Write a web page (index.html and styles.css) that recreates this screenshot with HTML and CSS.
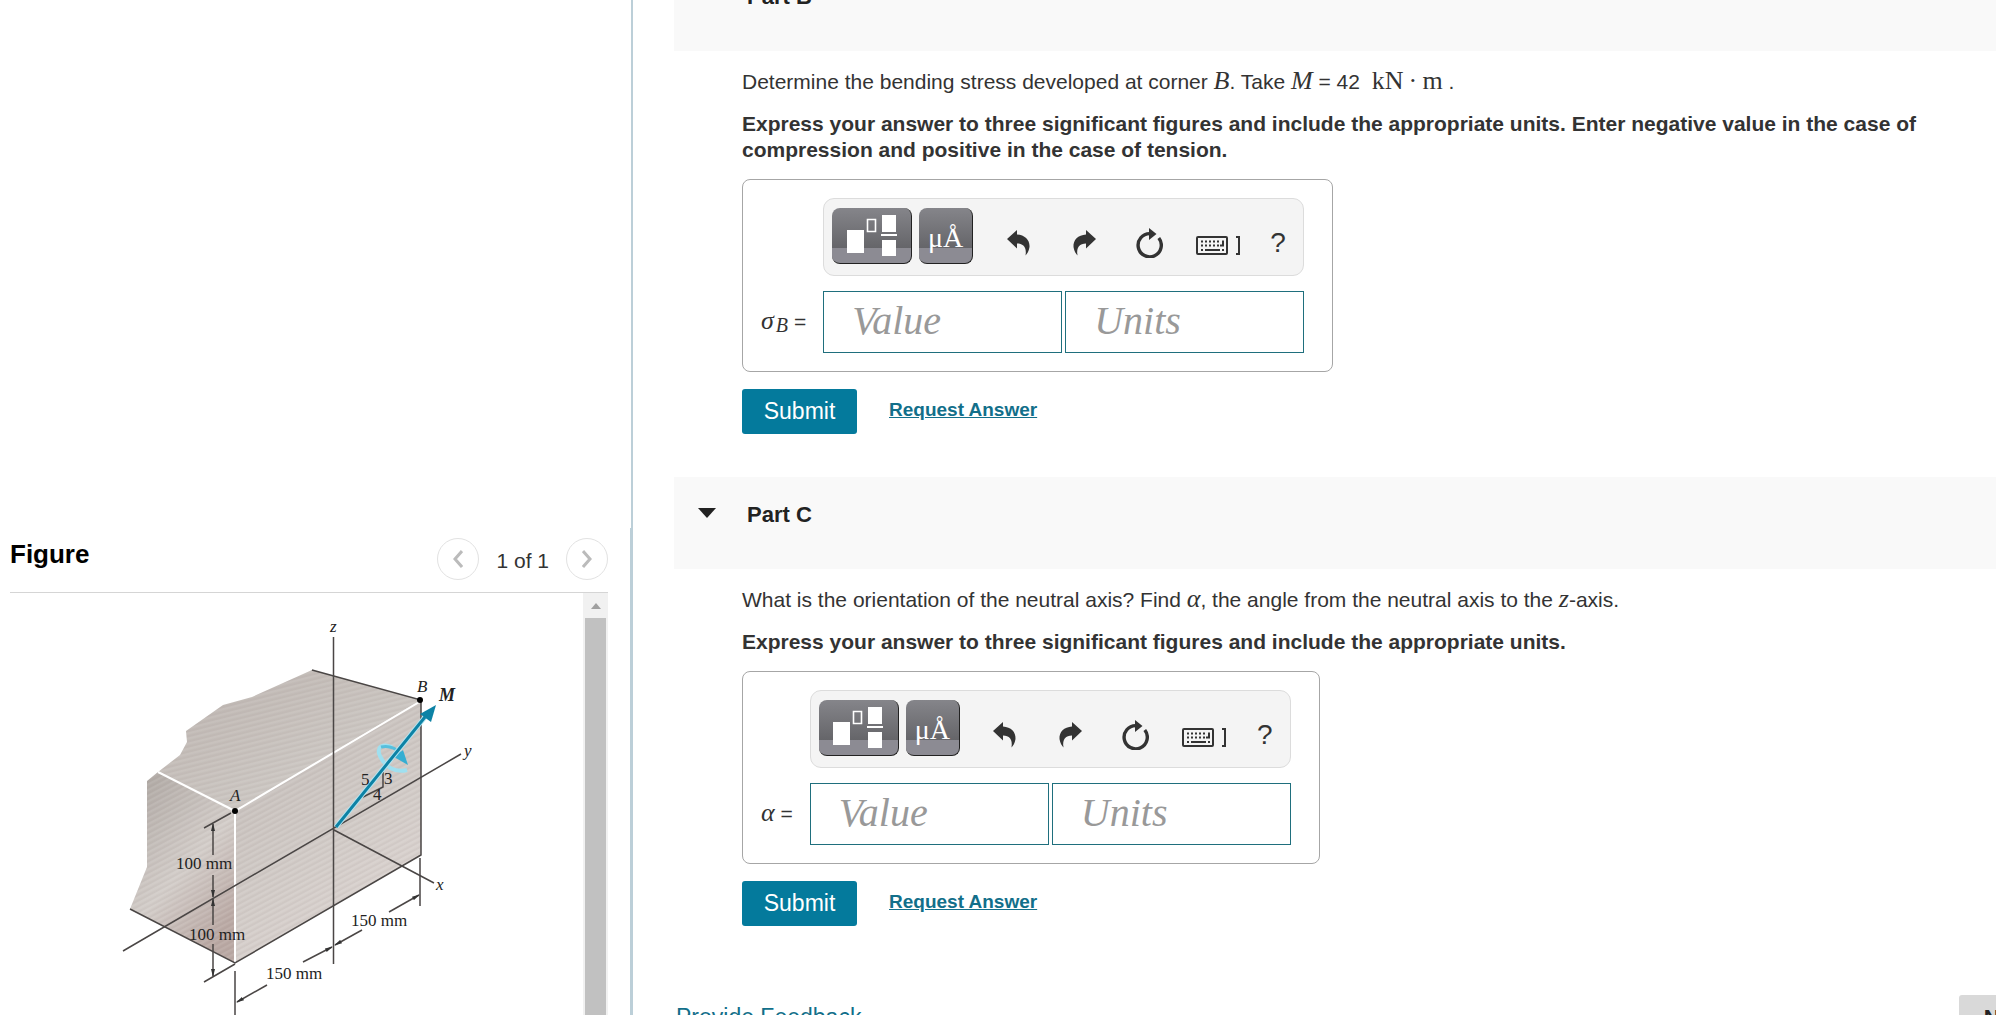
FILE: index.html
```
<!DOCTYPE html>
<html lang="en">
<head>
  <meta charset="UTF-8" />
  <meta name="viewport" content="width=device-width, initial-scale=1.0" />
  <title>Bending Stress</title>
  <link rel="stylesheet" href="styles.css">
</head>
<body>

  <!-- shared toolbar icons -->
  <svg class="defs" width="0" height="0" aria-hidden="true">
    <symbol id="i-template" viewBox="0 0 50 42">
      <path fill="#fff" d="M0 15h17v23H0zM35 0h14v17H35zM35 25h14v16H35zM34 19h16v2H34z" />
      <path fill="none" stroke="#fff" stroke-width="1.6" d="M20.5 4.5h8v12h-8z" />
    </symbol>
    <symbol id="i-undo" viewBox="0 0 24 26">
      <path d="M0 9 10 0v4.5C18 5 23 10 22.500 17 22 21 20 24 18.500 25.500 20 17 16 13.500 10 13.500v5z" />
    </symbol>
    <symbol id="i-redo" viewBox="0 0 24 26">
      <path d="M24 9 14 0v4.500C6 5 1 10 1.500 17 2 21 4 24 5.500 25.500 4 17 8 13.500 14 13.500v5z" />
    </symbol>
    <symbol id="i-reset" viewBox="0 0 28 30">
      <path fill="none" stroke="currentColor" stroke-width="3.400" d="M15 5.600A11.600 11.600 0 1 0 23.800 10" />
      <path d="M14 0 21.500 6 14 12z" />
    </symbol>
    <symbol id="i-keyboard" viewBox="0 0 46 20">
      <rect x="1" y="1" width="30" height="17" rx="1" fill="none" stroke="currentColor" stroke-width="2" />
      <path fill="none" stroke="currentColor" stroke-width="2" stroke-dasharray="2 2" d="M5 5.500h20M5 9.500h20" />
      <path fill="none" stroke="currentColor" stroke-width="2" d="M27 4.500v5h-3M5 14h2M9 14h15M26 14h2M40 1h3v17h-3" />
    </symbol>
  </svg>

  <aside class="side">
    <section class="figure">
      <header class="figure-head">
        <h2>Figure</h2>
        <nav class="pager">
          <button type="button" aria-label="Previous figure">
            <svg width="10" height="18" viewBox="0 0 10 18"><path d="M9 1 2 9l7 8" /></svg>
          </button>
          <span>1 of 1</span>
          <button type="button" aria-label="Next figure">
            <svg width="10" height="18" viewBox="0 0 10 18"><path d="M1 1l7 8-7 8" /></svg>
          </button>
        </nav>
      </header>
      <div class="figure-view">
        <svg class="beam" width="573" height="440" viewBox="10 594 573 440" role="img" aria-label="Beam cross section with moment M">
          <defs>
            <linearGradient id="top" x1="0" y1="0" x2="1" y2="1">
              <stop offset="0" stop-color="#bab2ad" />
              <stop offset="1" stop-color="#d6d2ce" />
            </linearGradient>
            <linearGradient id="left" x1="0" y1="0" x2="0.6" y2="1">
              <stop offset="0" stop-color="#aaa39e" />
              <stop offset="0.6" stop-color="#d3cdc9" />
              <stop offset="1" stop-color="#b9a8a3" />
            </linearGradient>
            <linearGradient id="front" x1="0" y1="0" x2="0.5" y2="1">
              <stop offset="0" stop-color="#bfb9b5" />
              <stop offset="1" stop-color="#dcd5d1" />
            </linearGradient>
            <pattern id="grain" width="40" height="5" patternUnits="userSpaceOnUse" patternTransform="rotate(-28)">
              <path d="M0 1h40" stroke="#8d817b" stroke-opacity=".14" />
              <path d="M0 3h40" stroke="#fff" stroke-opacity=".14" />
            </pattern>
            <pattern id="grain-top" width="40" height="5" patternUnits="userSpaceOnUse" patternTransform="rotate(-14)">
              <path d="M0 1h40" stroke="#8d817b" stroke-opacity=".12" />
              <path d="M0 3h40" stroke="#fff" stroke-opacity=".12" />
            </pattern>
            <marker id="tip" markerWidth="8" markerHeight="4" refX="7" refY="2" orient="auto-start-reverse" markerUnits="userSpaceOnUse">
              <path d="M0 0 8 2 0 4z" fill="#333" />
            </marker>
          </defs>

          <!-- faces -->
          <path id="face-top" fill="url(#top)" d="M312 671 421 701 235 812 158 773 180 756 187 743 186 732 223 706 252 698z" />
          <path fill="url(#grain-top)" d="M312 671 421 701 235 812 158 773 180 756 187 743 186 732 223 706 252 698z" />
          <path fill="url(#left)" d="M158 773 235 812V964L130 910 147 868V782z" />
          <path fill="url(#grain)" d="M158 773 235 812V964L130 910 147 868V782z" />
          <path fill="url(#front)" d="M235 812 421 701V856L235 964z" />
          <path fill="url(#grain)" d="M235 812 421 701V856L235 964z" />
          <path class="edge-light" d="M158 773 235 812 421 702M235 812V964" />
          <path class="edge" d="M312 671 421 701V856L235 964 130 910" />

          <!-- axes -->
          <path class="axis" d="M333.500 638V965M123 952 461 755M334 831 434 884" />

          <!-- dimensions -->
          <g class="dim">
            <path d="M204 829 231 814M204 983 235 965M235 972V1034M420 859V907" />
            <path marker-start="url(#tip)" d="M213 825V856" />
            <path marker-end="url(#tip)" d="M213 876V898" />
            <path marker-start="url(#tip)" d="M213 900V926" />
            <path marker-end="url(#tip)" d="M213 945V977" />
            <path marker-start="url(#tip)" d="M237 1003 267 986" />
            <path marker-end="url(#tip)" d="M303 963 332 948" />
            <path marker-start="url(#tip)" d="M335 946 362 931" />
            <path marker-end="url(#tip)" d="M389 913 419 896" />
            <path d="M383 773V788L363 798" />
          </g>

          <!-- moment vector -->
          <path d="M392 748C382 744 376 748 380 757 385 768 395 774 407 771" fill="none" stroke="#9fe0f0" stroke-width="4" />
          <path d="M381 748C390 746 398 750 402 757" fill="none" stroke="#56bfdd" stroke-width="3" />
          <path d="M408 766 394 758 403 751z" fill="#35aed2" />
          <path d="M336 828 425 718" stroke="#b5e6f2" stroke-width="5" />
          <path d="M336 828 425 718" stroke="#0d82a5" stroke-width="3" />
          <path d="M436 706 431 723 420 715z" fill="#0d82a5" />

          <circle cx="235" cy="812" r="3" />
          <circle cx="420" cy="701" r="3" />

          <g class="fig-text">
            <text x="176" y="870">100 mm</text>
            <text x="189" y="941">100 mm</text>
            <text x="266" y="980">150 mm</text>
            <text x="351" y="927">150 mm</text>
            <text x="361" y="786">5</text>
            <text x="384" y="785">3</text>
            <text x="373" y="801">4</text>
            <g class="fig-var">
              <text x="330" y="633">z</text>
              <text x="230" y="802">A</text>
              <text x="417" y="693">B</text>
              <text x="439" y="702" class="fig-m">M</text>
              <text x="464" y="757">y</text>
              <text x="436" y="891">x</text>
            </g>
          </g>
        </svg>
        <div class="scrollbar">
          <i class="scroll-up"></i>
          <i class="scroll-thumb"></i>
        </div>
      </div>
    </section>
  </aside>

  <main class="content">
    <section class="part">
      <header class="part-head">
        <i class="caret"></i>
        <h2>Part B</h2>
      </header>
      <div class="part-body">
        <p>Determine the bending stress developed at corner <span class="math"><i>B</i></span>. Take <span class="math"><i>M</i></span> = 42 &nbsp;<span class="math">kN&#8201;·&#8201;m</span> .</p>
        <p class="hint">Express your answer to three significant figures and include the appropriate units. Enter negative value in the case of compression and positive in the case of tension.</p>
        <form class="answer">
          <div class="toolbar">
            <button type="button" class="key key-wide" aria-label="Templates"><svg width="50" height="42"><use href="#i-template" /></svg></button>
            <button type="button" class="key">μÅ</button>
            <button type="button" class="tool" aria-label="Undo"><svg width="24" height="26"><use href="#i-undo" /></svg></button>
            <button type="button" class="tool" aria-label="Redo"><svg width="24" height="26"><use href="#i-redo" /></svg></button>
            <button type="button" class="tool" aria-label="Reset"><svg width="28" height="30"><use href="#i-reset" /></svg></button>
            <button type="button" class="tool tool-keys" aria-label="Keyboard shortcuts"><svg width="46" height="20"><use href="#i-keyboard" /></svg></button>
            <button type="button" class="tool tool-help">?</button>
          </div>
          <label class="symbol" for="value-b"><i>σ</i><sub>B</sub> =</label>
          <div class="fields">
            <input id="value-b" type="text" placeholder="Value">
            <input type="text" placeholder="Units" aria-label="Units">
          </div>
        </form>
        <div class="actions">
          <button type="button" class="submit">Submit</button>
          <a href="#">Request Answer</a>
        </div>
      </div>
    </section>

    <section class="part">
      <header class="part-head">
        <i class="caret"></i>
        <h2>Part C</h2>
      </header>
      <div class="part-body">
        <p>What is the orientation of the neutral axis? Find <span class="math"><i>α</i></span>, the angle from the neutral axis to the <span class="math"><i>z</i></span>-axis.</p>
        <p class="hint">Express your answer to three significant figures and include the appropriate units.</p>
        <form class="answer">
          <div class="toolbar">
            <button type="button" class="key key-wide" aria-label="Templates"><svg width="50" height="42"><use href="#i-template" /></svg></button>
            <button type="button" class="key">μÅ</button>
            <button type="button" class="tool" aria-label="Undo"><svg width="24" height="26"><use href="#i-undo" /></svg></button>
            <button type="button" class="tool" aria-label="Redo"><svg width="24" height="26"><use href="#i-redo" /></svg></button>
            <button type="button" class="tool" aria-label="Reset"><svg width="28" height="30"><use href="#i-reset" /></svg></button>
            <button type="button" class="tool tool-keys" aria-label="Keyboard shortcuts"><svg width="46" height="20"><use href="#i-keyboard" /></svg></button>
            <button type="button" class="tool tool-help">?</button>
          </div>
          <label class="symbol" for="value-c"><i>α</i> =</label>
          <div class="fields">
            <input id="value-c" type="text" placeholder="Value">
            <input type="text" placeholder="Units" aria-label="Units">
          </div>
        </form>
        <div class="actions">
          <button type="button" class="submit">Submit</button>
          <a href="#">Request Answer</a>
        </div>
      </div>
    </section>

    <footer class="foot">
      <a href="#">Provide Feedback</a>
      <button type="button" class="next">Next</button>
    </footer>
  </main>

</body>
</html>
```
FILE: styles.css
```
* {
  box-sizing: border-box;
}

body {
  margin: 0;
  display: flex;
  height: 100vh;
  overflow: hidden;
  background: #fff;
  color: #333;
  font-family: "Liberation Sans", Arial, sans-serif;
  font-size: 21px;
  line-height: 26px;
}

h2, p {
  margin: 0;
}

button {
  font-family: inherit;
  padding: 0;
  border: none;
  cursor: pointer;
}

.defs {
  position: absolute;
}

/* left side */
.side {
  flex: 0 0 633px;
  display: grid;
  grid-template-rows: 52vh 1fr;
  border-right: 2px solid #bccfd8;
}

.figure {
  grid-row: 2;
  display: flex;
  flex-direction: column;
  min-height: 0;
  padding: 0 22px 0 10px;
  border-right: 1px solid #bccfd8;
}

.figure-head {
  display: flex;
  justify-content: space-between;
  padding: 10px 0 12px;
  border-bottom: 1px solid #d5d5d5;
}

.figure-head h2 {
  color: #000;
  font-size: 26px;
  line-height: 32px;
}

.pager {
  display: flex;
  align-items: center;
  gap: 17px;
}

.pager span {
  padding-top: 4px;
}

.pager button {
  width: 42px;
  height: 42px;
  display: grid;
  place-items: center;
  border: 1px solid #e2e2e2;
  border-radius: 50%;
  background: #fff;
}

.pager path {
  fill: none;
  stroke: #bbb;
  stroke-width: 3;
}

.figure-view {
  display: flex;
  justify-content: space-between;
  flex: 1;
  min-height: 0;
  overflow: hidden;
}

.beam {
  flex: 0 0 auto;
}

.edge, .edge-light, .axis, .dim {
  fill: none;
  stroke: #4a4645;
  stroke-width: 1.5;
}

.edge-light {
  stroke: #fff;
  stroke-width: 2;
}

.fig-text {
  font-family: "Liberation Serif", "Times New Roman", serif;
  font-size: 17px;
  fill: #222;
}

.fig-var {
  font-style: italic;
}

.fig-m {
  font-size: 18px;
  font-weight: bold;
}

.scrollbar {
  flex: 0 0 25px;
  display: flex;
  flex-direction: column;
  align-items: center;
  background: #f1f1f1;
}

.scroll-up {
  margin: 10px 0 9px;
  border: 5px solid transparent;
  border-top: none;
  border-bottom: 6px solid #a0a0a0;
}

.scroll-thumb {
  flex: 1;
  width: 21px;
  background: #c1c1c1;
}

/* right side */
.content {
  flex: 1;
  min-width: 0;
  margin-top: -41px; /* scrolled a little past Part B */
  padding-left: 41px;
}

.part-head {
  display: flex;
  align-items: flex-start;
  gap: 31px;
  height: 92px;
  padding: 24px 24px;
  background: #f9f9f9;
}

.part-head h2 {
  color: #222;
  font-size: 22px;
  line-height: 28px;
}

.caret {
  margin-top: 7px;
  border: 9px solid transparent;
  border-top: 10px solid #222;
  border-bottom: none;
}

.part-body {
  padding: 18px 40px 43px 68px;
}

.part-body p {
  margin-bottom: 16px;
}

.hint {
  font-weight: bold;
}

.math {
  font-family: "Liberation Serif", "Times New Roman", serif;
  font-size: 26px;
  line-height: 1px;
}

.answer {
  display: inline-grid;
  grid-template-columns: auto auto;
  column-gap: 17px;
  row-gap: 15px;
  align-items: center;
  padding: 18px 28px 18px 18px;
  border: 1px solid #a6a6a6;
  border-radius: 8px;
  vertical-align: top;
}

.toolbar {
  grid-column: 2;
  display: flex;
  height: 78px;
  padding: 9px 1px 9px 8px;
  background: #f4f4f4;
  border: 1px solid #dcdcdc;
  border-radius: 11px;
}

.key {
  width: 54px;
  height: 56px;
  margin-right: 7px;
  display: grid;
  place-items: center;
  color: #fff;
  font-family: "Liberation Serif", "Times New Roman", serif;
  font-size: 28px;
  background: linear-gradient(#85858a, #656569 73%, #8c8b93 73%, #8c8b93);
  border-right: 1px solid #222;
  border-bottom: 1px solid #222;
  border-radius: 8px;
}

.key:not(.key-wide) {
  padding-top: 4px;
}

.key-wide {
  width: 80px;
}

.tool {
  width: 65px;
  height: 56px;
  padding-top: 14px;
  display: grid;
  place-items: center;
  color: #333;
  fill: #333;
  background: none;
}

.key + .tool {
  margin-left: 6px;
}

.tool-keys {
  width: 75px;
  padding-top: 20px;
}

.tool-help {
  width: 44px;
  font-size: 28px;
}

.symbol {
  white-space: nowrap;
}

.symbol i {
  font-family: "Liberation Serif", "Times New Roman", serif;
  font-size: 26px;
  line-height: 1px;
}

.symbol sub {
  margin-left: 2px;
  font-family: "Liberation Serif", "Times New Roman", serif;
  font-size: 20px;
  font-style: italic;
  line-height: 1px;
  vertical-align: -3px;
}

.fields {
  display: flex;
  gap: 3px;
}

.fields input {
  width: 239px;
  height: 62px;
  padding: 0 28px 3px;
  border: 1px solid #1f6f7d;
  background: #fff;
  color: #333;
  font-family: "Liberation Serif", "Times New Roman", serif;
  font-size: 40px;
  font-style: italic;
}

.fields input::placeholder {
  color: #999;
}

.actions {
  display: flex;
  align-items: center;
  gap: 32px;
  margin-top: 17px;
}

.submit {
  width: 115px;
  height: 45px;
  color: #fff;
  font-size: 23px;
  background: #047a9c;
  border-radius: 3px;
}

.actions a {
  margin-bottom: 4px;
  color: #126f8a;
  font-size: 19px;
  font-weight: bold;
}

.foot {
  display: flex;
  justify-content: space-between;
  margin: 26px -60px 0 2px;
}

.foot a {
  padding-top: 9px;
  color: #126f8a;
  font-size: 23px;
  text-decoration: none;
}

.next {
  width: 97px;
  height: 46px;
  color: #222;
  font-size: 22px;
  font-weight: bold;
  background: #d9d9d9;
  border-radius: 3px;
}
```
